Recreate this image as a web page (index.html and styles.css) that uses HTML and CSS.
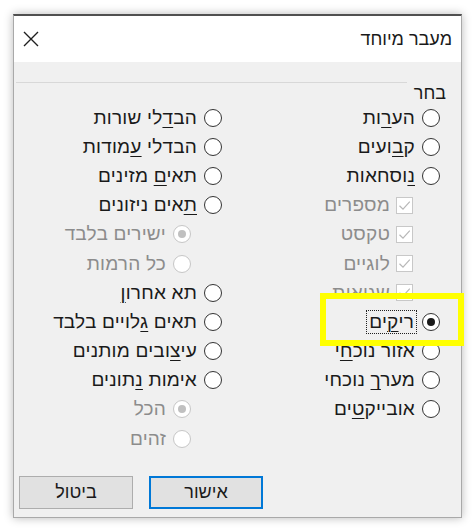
FILE: index.html
```html
<!DOCTYPE html>
<html lang="he">
<head>
<meta charset="utf-8">
<title>מעבר מיוחד</title>
<link rel="stylesheet" href="styles.css">
</head>
<body>
<div class="dialog" dir="rtl">
  <div class="titlebar">
    <span class="title">מעבר מיוחד</span>
    <span class="close"><svg width="16" height="16" viewBox="0 0 16 16"><path d="M1 1 L15 15 M15 1 L1 15" stroke="#1f1f1f" stroke-width="1.4" fill="none"/></svg></span>
  </div>
  <div class="content">
    <div class="group-head"><span class="group-label">בחר</span><span class="rule"></span></div>
    <div class="cols">
      <div class="col">
        <div class="row"><span class="radio"></span><span class="label">הע<u>ר</u>ות</span></div>
        <div class="row"><span class="radio"></span><span class="label">ק<u>ב</u>ועים</span></div>
        <div class="row"><span class="radio"></span><span class="label"><u>נ</u>וסחאות</span></div>
        <div class="row sub disabled"><span class="check"><svg width="13" height="13" viewBox="0 0 13 13"><path d="M1.5 6.8 L5 10.2 L11.8 2.6" stroke="#b8b8b8" stroke-width="1.2" fill="none"/></svg></span><span class="label">מספרים</span></div>
        <div class="row sub disabled"><span class="check"><svg width="13" height="13" viewBox="0 0 13 13"><path d="M1.5 6.8 L5 10.2 L11.8 2.6" stroke="#b8b8b8" stroke-width="1.2" fill="none"/></svg></span><span class="label">טקסט</span></div>
        <div class="row sub disabled"><span class="check"><svg width="13" height="13" viewBox="0 0 13 13"><path d="M1.5 6.8 L5 10.2 L11.8 2.6" stroke="#b8b8b8" stroke-width="1.2" fill="none"/></svg></span><span class="label">לוגיים</span></div>
        <div class="row sub disabled"><span class="check"><svg width="13" height="13" viewBox="0 0 13 13"><path d="M1.5 6.8 L5 10.2 L11.8 2.6" stroke="#b8b8b8" stroke-width="1.2" fill="none"/></svg></span><span class="label">שגיאות</span></div>
        <div class="row"><span class="radio checked"></span><span class="label focus">רי<u>ק</u>ים</span></div>
        <div class="row"><span class="radio"></span><span class="label">אזור נוכ<u>ח</u>י</span></div>
        <div class="row"><span class="radio"></span><span class="label">מער<u>ך</u> נוכחי</span></div>
        <div class="row"><span class="radio"></span><span class="label">אובייק<u>ט</u>ים</span></div>
      </div>
      <div class="col">
        <div class="row"><span class="radio"></span><span class="label">הב<u>ד</u>לי שורות</span></div>
        <div class="row"><span class="radio"></span><span class="label">הבדלי <u>ע</u>מודות</span></div>
        <div class="row"><span class="radio"></span><span class="label">תאי<u>ם</u> מזינים</span></div>
        <div class="row"><span class="radio"></span><span class="label"><u>ת</u>אים ניזונים</span></div>
        <div class="row sub2 disabled"><span class="radio checked"></span><span class="label">ישירים בלבד</span></div>
        <div class="row sub2 disabled"><span class="radio"></span><span class="label">כל הרמות</span></div>
        <div class="row"><span class="radio"></span><span class="label">תא אחרו<u>ן</u></span></div>
        <div class="row"><span class="radio"></span><span class="label">תאים <u>ג</u>לויים בלבד</span></div>
        <div class="row"><span class="radio"></span><span class="label">עי<u>צ</u>ובים מותנים</span></div>
        <div class="row"><span class="radio"></span><span class="label">אימות <u>נ</u>תונים</span></div>
        <div class="row sub2 disabled"><span class="radio checked"></span><span class="label">הכל</span></div>
        <div class="row sub2 disabled"><span class="radio"></span><span class="label">זהים</span></div>
      </div>
    </div>
    <div class="buttons">
      <span class="btn default">אישור</span>
      <span class="btn">ביטול</span>
    </div>
  </div>
</div>
<div class="highlight"></div>
</body>
</html>
```
FILE: styles.css
```css
* { box-sizing: border-box; }
html, body { margin: 0; padding: 0; background: #ffffff; }
body {
  font-family: "Liberation Sans", "DejaVu Sans", sans-serif;
  color: #1a1a1a;
  width: 474px;
  height: 530px;
  overflow: hidden;
  position: relative;
}
.dialog {
  margin: 14px 0 0 13px;
  width: 449px;
  height: 504px;
  border: 1px solid #a9a9a9;
  border-top: 2px solid #505050;
  background: #f0f0f0;
  box-shadow: 0 0 9px rgba(0,0,0,0.28);
  display: flex;
  flex-direction: column;
}
.titlebar {
  height: 46px;
  background: #ffffff;
  display: flex;
  align-items: center;
  justify-content: space-between;
  padding: 0 9px 0 9px;
}
.title { font-size: 18px; }
.close { display: flex; width: 16px; height: 16px; }
.content { flex: 1; display: flex; flex-direction: column; }
.group-head {
  display: flex;
  align-items: center;
  height: 20px;
  margin-top: 21px;
  padding-right: 15px;
  padding-left: 2px;
}
.group-label { font-size: 18px; margin-left: 7px; }
.rule {
  flex: 1;
  height: 1px;
  background: #d8d8d8;
  align-self: flex-start;
  margin-top: -1px;
}
.cols {
  display: grid;
  grid-template-columns: 218px 1fr;
  padding-right: 21px;
}
.col { display: flex; flex-direction: column; }
.row {
  display: flex;
  align-items: center;
  height: 29.2px;
  gap: 7px;
  font-size: 19px;
  letter-spacing: 0.2px;
}
.row.sub { padding-right: 27px; gap: 6px; }
.row.sub2 { padding-right: 31px; }
.disabled .label { color: #8c8c8c; }
.label { white-space: nowrap; line-height: 22px; }
.label u { text-underline-offset: 3px; text-decoration-thickness: 1px; }
.radio {
  width: 18px;
  height: 18px;
  border: 1.5px solid #333333;
  border-radius: 50%;
  background: #ffffff;
  display: flex;
  align-items: center;
  justify-content: center;
  flex: none;
}
.radio.checked::after {
  content: "";
  width: 8px;
  height: 8px;
  border-radius: 50%;
  background: #1a1a1a;
}
.disabled .radio { border-color: #c6c6c6; }
.disabled .radio.checked::after { background: #c0c0c0; }
.check {
  width: 17px;
  height: 17px;
  border: 1px solid #c8c8c8;
  background: #ffffff;
  display: flex;
  align-items: center;
  justify-content: center;
  flex: none;
}
.focus {
  outline: 1px dotted #202020;
  outline-offset: 0;
  padding: 0 2px;
  margin-right: -1px;
}
.buttons {
  display: flex;
  justify-content: flex-end;
  gap: 16px;
  margin-top: 23px;
  padding-left: 5px;
}
.btn {
  width: 114px;
  height: 33px;
  background: #e1e1e1;
  border: 1px solid #adadad;
  display: flex;
  align-items: center;
  justify-content: center;
  font-size: 18px;
}
.btn.default { border: 2px solid #0078d7; }
.highlight {
  position: absolute;
  left: 320px;
  top: 293px;
  width: 144px;
  height: 53px;
  border: 6.5px solid #ffff00;
}
```
